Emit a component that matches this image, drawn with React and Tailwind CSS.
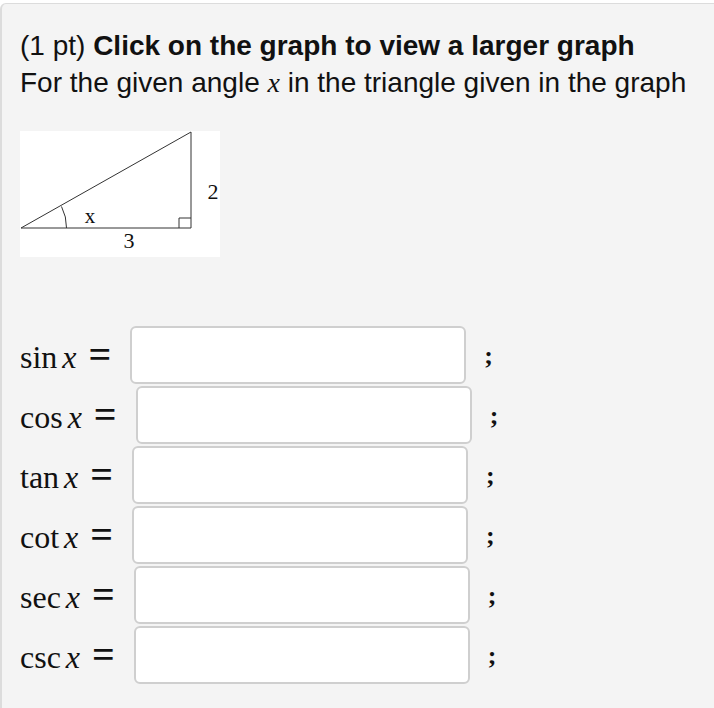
import React from "react";

function Triangle() {
  return (
    <svg width="200" height="126" viewBox="0 0 200 126" className="block bg-white">
      <path d="M1 97 L171 1 L171 97 Z" fill="none" stroke="#333" strokeWidth="1" />
      <path d="M159 97 L159 87 L171 87" fill="none" stroke="#333" strokeWidth="1" />
      <path d="M41.5 75.5 A46 46 0 0 1 46.5 97" fill="none" stroke="#333" strokeWidth="1" />
      <text x="70" y="92" fontFamily="'Liberation Serif', serif" fontSize="21" textAnchor="middle" fill="#111">x</text>
      <text x="193" y="68" fontFamily="'Liberation Serif', serif" fontSize="22" textAnchor="middle" fill="#111">2</text>
      <text x="109" y="117" fontFamily="'Liberation Serif', serif" fontSize="22" textAnchor="middle" fill="#111">3</text>
    </svg>
  );
}

const rows = ["sin", "cos", "tan", "cot", "sec", "csc"];

export default function App() {
  return (
    <div className="min-h-[708px] bg-white pt-[3px]">
      <div className="min-h-[705px] bg-[#f4f4f4] border-t border-l-2 border-[#dcdcdc] rounded-tl-md pl-[18px] pt-[23px] pb-6">
        <div className="font-['Liberation_Sans',Arial,sans-serif] text-[28px] leading-[37px] text-[#111]">
          <p>
            (1 pt) <span className="font-bold">Click on the graph to view a larger graph</span>
          </p>
          <p>
            For the given angle{" "}
            <span className="font-['Liberation_Serif',serif] italic">x</span> in the triangle given in the graph
          </p>
        </div>

        <div className="mt-[30px]">
          <Triangle />
        </div>

        <div className="mt-[69px] flex flex-col gap-[2px]">
          {rows.map((fn) => (
            <div key={fn} className="flex items-center h-[58px]">
              <span className="font-['Liberation_Serif',serif] text-[32px] leading-none text-[#111] whitespace-nowrap">
                {fn}
                <span className="italic ml-[5px]">x</span>
                <span className="ml-[12px] text-[40px] font-bold">=</span>
              </span>
              <div className="ml-[19px] w-[336px] h-[58px] bg-white border-2 border-[#cfcfcf] rounded-md" />
              <span className="ml-[18px] font-['Liberation_Serif',serif] font-bold text-[26px] text-[#111]">;</span>
            </div>
          ))}
        </div>
      </div>
    </div>
  );
}
